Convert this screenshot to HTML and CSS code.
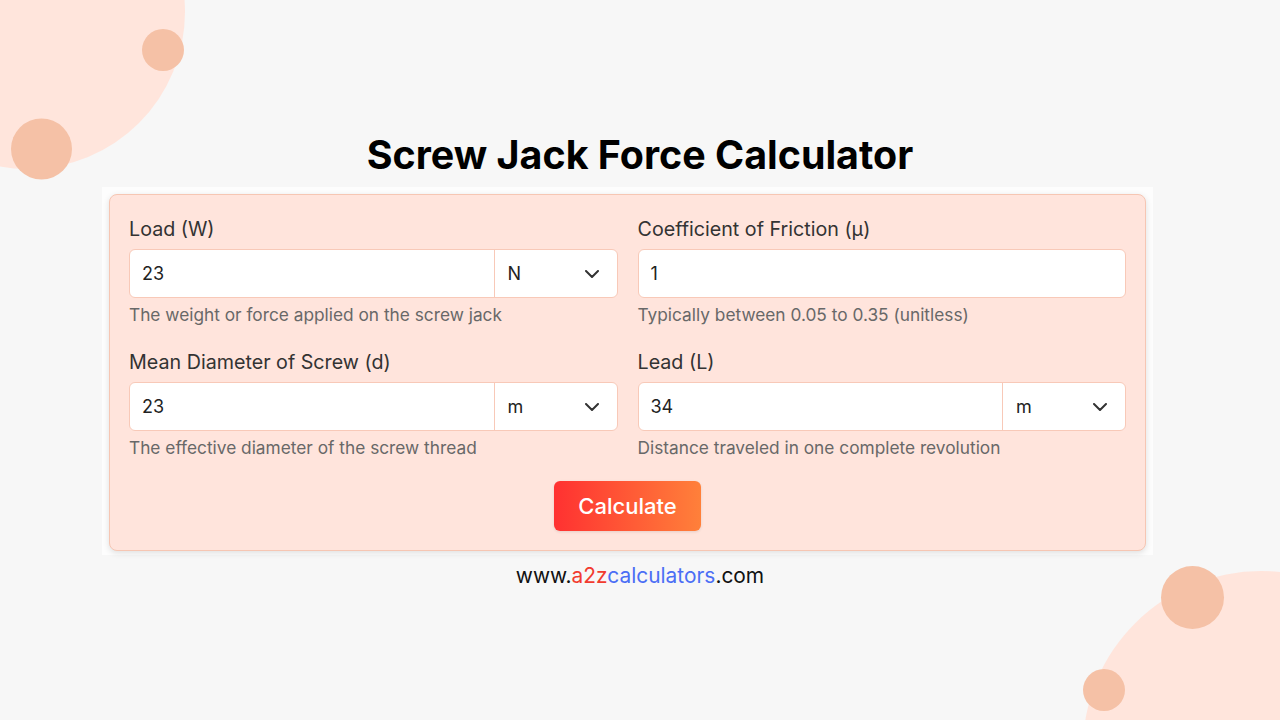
FILE: index.html
```html
<!DOCTYPE html>
<html lang="en">
<head>
<meta charset="utf-8">
<title>Screw Jack Force Calculator</title>
<link rel="stylesheet" href="styles.css">
</head>
<body>
<svg class="decor" viewBox="0 0 1280 720" width="1280" height="720" aria-hidden="true">
  <circle class="pale" cx="28" cy="12" r="157"/>
  <circle class="dot" cx="163" cy="50" r="21"/>
  <circle class="dot" cx="41.5" cy="149" r="30.5"/>
  <circle class="pale" cx="1261" cy="749" r="178"/>
  <circle class="dot" cx="1192.5" cy="597.5" r="31.5"/>
  <circle class="dot" cx="1104" cy="690" r="21"/>
</svg>

<main class="page">
  <h1 class="title">Screw Jack Force Calculator</h1>
  <div class="frame">
    <form class="card">
      <div class="grid">
        <div class="field">
          <label class="label">Load (W)</label>
          <div class="control">
            <span class="value">23</span>
            <span class="unit"><span>N</span><svg class="chev" viewBox="0 0 14 8" width="14" height="8"><polyline points="1,1 7,7 13,1"/></svg></span>
          </div>
          <p class="hint">The weight or force applied on the screw jack</p>
        </div>
        <div class="field">
          <label class="label">Coefficient of Friction (μ)</label>
          <div class="control">
            <span class="value">1</span>
          </div>
          <p class="hint">Typically between 0.05 to 0.35 (unitless)</p>
        </div>
        <div class="field">
          <label class="label">Mean Diameter of Screw (d)</label>
          <div class="control">
            <span class="value">23</span>
            <span class="unit"><span>m</span><svg class="chev" viewBox="0 0 14 8" width="14" height="8"><polyline points="1,1 7,7 13,1"/></svg></span>
          </div>
          <p class="hint">The effective diameter of the screw thread</p>
        </div>
        <div class="field">
          <label class="label">Lead (L)</label>
          <div class="control">
            <span class="value">34</span>
            <span class="unit"><span>m</span><svg class="chev" viewBox="0 0 14 8" width="14" height="8"><polyline points="1,1 7,7 13,1"/></svg></span>
          </div>
          <p class="hint">Distance traveled in one complete revolution</p>
        </div>
      </div>
      <div class="actions">
        <button type="button" class="btn">Calculate</button>
      </div>
    </form>
  </div>
  <p class="site">www.<span class="red">a2z</span><span class="blue">calculators</span>.com</p>
</main>
</body>
</html>
```

FILE: styles.css
```css
* { box-sizing: border-box; }
html, body { margin: 0; padding: 0; }
body {
  width: 1280px;
  height: 720px;
  background: #f7f7f7;
  position: relative;
  overflow: hidden;
  font-family: Inter, "Noto Sans", sans-serif;
  color: #333;
}

.decor { position: absolute; left: 0; top: 0; display: block; }
.decor .pale { fill: #ffe5dc; }
.decor .dot { fill: #f5c1a6; }

.page {
  position: relative;
  display: flex;
  flex-direction: column;
  align-items: center;
  padding-top: 131px;
}

.title {
  margin: 0;
  font-family: Inter, sans-serif;
  font-weight: 700;
  font-size: 39.4px;
  line-height: 48px;
  color: #000;
}

.frame {
  align-self: flex-start;
  margin: 8px 0 0 102px;
  width: 1051px;
  padding: 7px 7px 4px;
  background: #fdfdfd;
}

.card {
  background: #ffe4dc;
  border: 1px solid #f6c6b3;
  border-radius: 8px;
  box-shadow: 0 2px 6px rgba(0, 0, 0, 0.12);
  padding: 20px 19px 19px;
}

.grid {
  display: grid;
  grid-template-columns: 1fr 1fr;
  column-gap: 20px;
  row-gap: 23px;
}

.field { display: flex; flex-direction: column; }

.label {
  font-size: 19.7px;
  line-height: 28px;
  color: #333;
}

.control {
  margin-top: 6px;
  height: 49px;
  display: flex;
  background: #fff;
  border: 1px solid #f8c9b8;
  border-radius: 6px;
  overflow: hidden;
}

.value {
  flex: 1;
  display: flex;
  align-items: center;
  padding-left: 12px;
  font-size: 18px;
  color: #222;
}

.unit {
  width: 123px;
  border-left: 1px solid #f8c9b8;
  display: flex;
  align-items: center;
  justify-content: space-between;
  padding: 0 18px 0 13px;
  font-size: 18px;
  color: #222;
}

.chev { fill: none; stroke: #333; stroke-width: 2; stroke-linecap: round; stroke-linejoin: round; }

.hint {
  margin: 6px 0 0;
  font-size: 17.3px;
  line-height: 21px;
  color: #686868;
}

.actions {
  display: flex;
  justify-content: center;
  margin-top: 23px;
}

.btn {
  width: 147px;
  height: 50px;
  border: none;
  border-radius: 6px;
  background: linear-gradient(90deg, #ff3131 0%, #ff803a 100%);
  color: #fff;
  font-family: Inter, sans-serif;
  font-size: 22px;
  font-weight: 500;
  box-shadow: 0 1px 3px rgba(0,0,0,0.1);
}

.site {
  margin: 9px 0 0;
  font-family: Inter, sans-serif;
  font-size: 20.9px;
  line-height: 24px;
  color: #111;
}
.red { color: #f23b2f; }
.blue { color: #4b6ef5; }
```
